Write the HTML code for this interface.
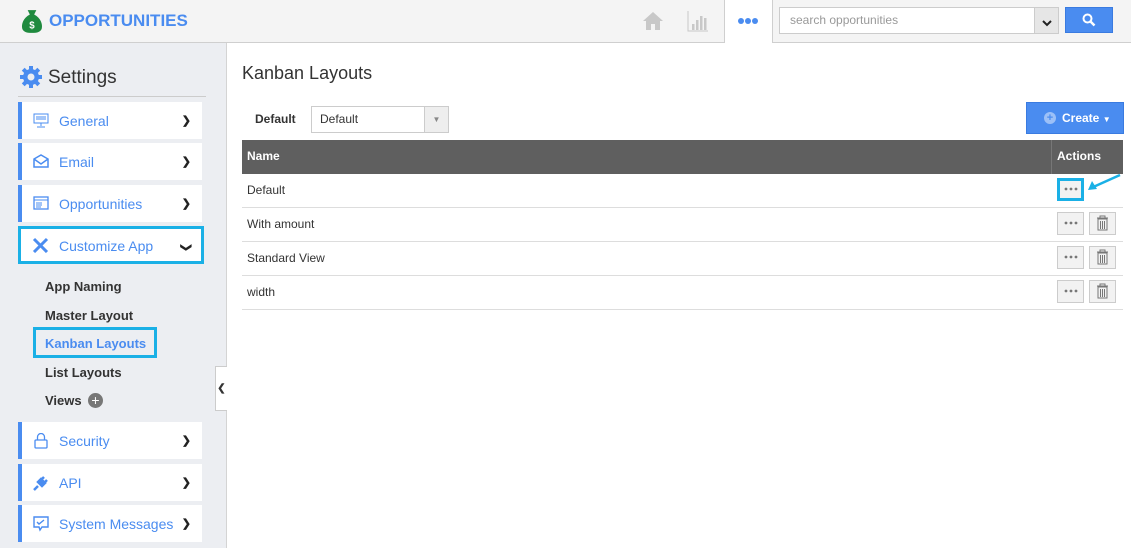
<!DOCTYPE html>
<html><head><style>
*{box-sizing:border-box;margin:0;padding:0}
body{width:1131px;height:548px;overflow:hidden;font-family:"Liberation Sans",sans-serif;background:#fff;position:relative;font-size:14px;color:#333}
.abs{position:absolute}
.hdr{left:0;top:0;width:1131px;height:43px;background:#f4f4f4;border-bottom:1px solid #cfcfcf}
.side{left:0;top:43px;width:227px;height:505px;background:#eceef2;border-right:1px solid #d4d4d4}
.item{position:absolute;left:18px;width:184px;height:37px;background:#fff;border-left:4px solid #4a8cf0;color:#4a8cf0;font-size:14px;line-height:39px;padding-left:37px}
.item svg{position:absolute;left:11px;top:11px}
.chev{position:absolute;right:11px;top:0;color:#222;font-weight:bold;font-size:11px}
.sub{position:absolute;left:45px;font-size:13px;font-weight:bold;color:#333}
.row{position:absolute;left:242px;width:881px;height:34px;border-bottom:1px solid #ddd;font-size:12px;line-height:33px;padding-left:5px}
.bt{position:absolute;top:4px;width:27px;height:23px;background:#f2f2f2;border:1px solid #ccc;text-align:center}
.bt svg{display:block;margin:8px auto 0}
</style></head><body>
<div class="abs hdr">
 <svg class="abs" style="left:21px;top:8px" width="22" height="26" viewBox="0 0 20 24"><path d="M6 2h8l-2 4h-4z M8 6h4c6 3 8 9 7 13-1 3-4 4-9 4s-8-1-9-4c-1-4 1-10 7-13z" fill="#1f8a3e"/><text x="10" y="19" font-size="9" fill="#fff" text-anchor="middle" font-weight="bold" font-family="Liberation Sans">$</text></svg>
 <div class="abs" style="left:49px;top:11px;font-size:17px;font-weight:bold;color:#4a8cf0">OPPORTUNITIES</div>
 <svg class="abs" style="left:642px;top:11px" width="22" height="20" viewBox="0 0 22 20"><path d="M11 1L1 10h3v9h5v-6h4v6h5v-9h3z" fill="#c8c8c8"/></svg>
 <svg class="abs" style="left:687px;top:10px" width="22" height="22" viewBox="0 0 22 22"><path d="M1 1v20h20" stroke="#c8c8c8" fill="none"/><rect x="5" y="14" width="2.5" height="6" fill="#c8c8c8"/><rect x="9" y="10" width="2.5" height="10" fill="#c8c8c8"/><rect x="13" y="6" width="2.5" height="14" fill="#c8c8c8"/><rect x="17" y="8" width="2.5" height="12" fill="#c8c8c8"/></svg>
 <div class="abs" style="left:724px;top:0;width:49px;height:43px;background:#fff;border-left:1px solid #cfcfcf;border-right:1px solid #cfcfcf"></div>
 <svg class="abs" style="left:737px;top:17px" width="22" height="8"><circle cx="4" cy="4" r="3" fill="#4a8cf0"/><circle cx="11" cy="4" r="3" fill="#4a8cf0"/><circle cx="18" cy="4" r="3" fill="#4a8cf0"/></svg>
 <div class="abs" style="left:779px;top:7px;width:280px;height:27px;background:#fff;border:1px solid #ccc;font-size:12px;color:#999;line-height:25px;padding-left:10px">search opportunities</div>
 <div class="abs" style="left:1034px;top:7px;width:25px;height:27px;background:#e6e6e6;border:1px solid #ccc"><svg width="10" height="7" style="position:absolute;left:7px;top:12px"><path d="M1 1l4 4 4-4" stroke="#222" stroke-width="2" fill="none"/></svg></div>
 <div class="abs" style="left:1065px;top:7px;width:48px;height:26px;background:#4a8cf0;border:1px solid #3a7be0"></div>
 <svg class="abs" style="left:1082px;top:13px" width="14" height="14"><circle cx="5.5" cy="5.5" r="4" stroke="#fff" stroke-width="2" fill="none"/><path d="M8.5 8.5l4 4" stroke="#fff" stroke-width="2.5"/></svg>
</div>
<div class="abs side"></div>
<svg class="abs" style="left:19px;top:65px" width="24" height="24" viewBox="0 0 24 24"><g fill="#4a8cf0"><circle cx="12" cy="12" r="8"/><rect x="10" y="1" width="4" height="22"/><rect x="1" y="10" width="22" height="4"/><rect x="10" y="1" width="4" height="22" transform="rotate(45 12 12)"/><rect x="10" y="1" width="4" height="22" transform="rotate(-45 12 12)"/></g><circle cx="12" cy="12" r="3.5" fill="#eceef2"/></svg>
<div class="abs" style="left:48px;top:67px;font-size:19px;color:#333">Settings</div>
<div class="abs" style="left:18px;top:96px;width:188px;height:1px;background:#ccc"></div>
<div class="item" style="top:102px"><svg width="16" height="15"><rect x="1" y="1" width="14" height="9" fill="none" stroke="#4a8cf0"/><path d="M3 4h10M3 6h10M8 10v3M4 14h8" stroke="#4a8cf0"/></svg>General<span class="chev">&#10095;</span></div>
<div class="item" style="top:143px"><svg width="16" height="15"><path d="M1 5l7-4 7 4v8H1z M1 5l7 5 7-5" fill="none" stroke="#4a8cf0" stroke-width="1.5"/></svg>Email<span class="chev">&#10095;</span></div>
<div class="item" style="top:185px"><svg width="16" height="15"><rect x="1" y="1" width="14" height="12" fill="none" stroke="#4a8cf0" stroke-width="1.3"/><path d="M1 4h14M3 7h6M3 9h6M3 11h5" stroke="#4a8cf0"/></svg>Opportunities<span class="chev">&#10095;</span></div>
<div class="item" style="top:226px;left:18px;width:186px;height:38px;border:3px solid #1ab0e6;line-height:35px;padding-left:38px"><svg width="17" height="16" style="left:11px;top:8px"><path d="M2 2l13 13M15 2L2 15" stroke="#4a8cf0" stroke-width="3"/></svg>Customize App<span class="chev" style="right:11px;top:1px;transform:rotate(90deg)">&#10095;</span></div>
<div class="sub" style="top:279px">App Naming</div>
<div class="sub" style="top:308px">Master Layout</div>
<div class="abs" style="left:33px;top:327px;width:124px;height:31px;border:3px solid #1ab0e6"></div>
<div class="sub" style="top:336px;color:#4a8cf0">Kanban Layouts</div>
<div class="sub" style="top:365px">List Layouts</div>
<div class="sub" style="top:393px">Views</div>
<div class="abs" style="left:88px;top:393px;width:15px;height:15px;border-radius:50%;background:#777;color:#fff;font-size:14px;line-height:14px;text-align:center">+</div>
<div class="abs" style="left:215px;top:366px;width:12px;height:45px;background:#fff;border:1px solid #ccc;border-right:none;font-size:10px;font-weight:bold;line-height:43px;text-align:center">&#10094;</div>
<div class="item" style="top:422px"><svg width="16" height="16"><rect x="2" y="7" width="12" height="8" rx="1" fill="none" stroke="#4a8cf0" stroke-width="1.3"/><path d="M4.5 7V4a3.5 3.5 0 017 0v3" fill="none" stroke="#4a8cf0" stroke-width="1.3"/></svg>Security<span class="chev">&#10095;</span></div>
<div class="item" style="top:464px"><svg width="16" height="16"><path d="M1 15l4-4M5 7l4 4 3-3-4-4zM9 4l2-2M12 7l2-2" stroke="#4a8cf0" stroke-width="2.5" fill="#4a8cf0"/></svg>API<span class="chev">&#10095;</span></div>
<div class="item" style="top:505px"><svg width="16" height="16"><path d="M1 1h14v10H9l-2 3-1-3H1z" fill="none" stroke="#4a8cf0" stroke-width="1.4"/><path d="M4 6l2 2 5-4" stroke="#4a8cf0" stroke-width="1.4" fill="none"/></svg>System Messages<span class="chev">&#10095;</span></div>

<div class="abs" style="left:242px;top:63px;font-size:18px;color:#333">Kanban Layouts</div>
<div class="abs" style="left:255px;top:112px;font-size:12px;font-weight:bold">Default</div>
<div class="abs" style="left:311px;top:106px;width:138px;height:27px;border:1px solid #ccc;background:#fff;font-size:12px;line-height:25px;padding-left:8px">Default</div>
<div class="abs" style="left:424px;top:107px;width:24px;height:25px;background:#eee;border-left:1px solid #ccc;color:#888;font-size:8px;text-align:center;line-height:25px">&#9660;</div>
<div class="abs" style="left:1026px;top:102px;width:98px;height:32px;background:#4a8cf0;border:1px solid #3a7be0;color:#fff;font-size:12px;font-weight:bold;line-height:30px;padding-left:35px">Create <span style="font-size:8px">&#9660;</span></div>
<div class="abs" style="left:1044px;top:112px;width:12px;height:12px;border-radius:50%;background:#9cc0f7;color:#4a8cf0;font-size:11px;line-height:12px;text-align:center;font-weight:bold">+</div>
<div class="abs" style="left:242px;top:140px;width:881px;height:34px;background:#5f5f5f;color:#fff;font-size:12px;font-weight:bold;line-height:32px;padding-left:5px">Name</div>
<div class="abs" style="left:1051px;top:140px;width:1px;height:34px;background:#777"></div>
<div class="abs" style="left:1057px;top:140px;color:#fff;font-size:12px;font-weight:bold;line-height:32px">Actions</div>
<div class="row" style="top:174px">Default<div class="bt" style="left:815px;border:3px solid #1ab0e6"><svg width="14" height="4" style="margin-top:6px"><circle cx="2" cy="2" r="1.4" fill="#777"/><circle cx="7" cy="2" r="1.4" fill="#777"/><circle cx="12" cy="2" r="1.4" fill="#777"/></svg></div></div>
<svg class="abs" style="left:1086px;top:173px" width="36" height="20"><path d="M34 2L5 15" stroke="#1ab0e6" stroke-width="2.5"/><path d="M2 17l4-9 5 8z" fill="#1ab0e6"/></svg>
<div class="row" style="top:208px">With amount<div class="bt" style="left:815px"><svg width="14" height="4"><circle cx="2" cy="2" r="1.4" fill="#777"/><circle cx="7" cy="2" r="1.4" fill="#777"/><circle cx="12" cy="2" r="1.4" fill="#777"/></svg></div><div class="bt" style="left:847px"><svg width="13" height="16" style="margin-top:2px"><path d="M1 3h11M4 3V1h5v2M2 4h9v11H2zM4.5 6v8M6.5 6v8M8.5 6v8" stroke="#777" fill="none"/></svg></div></div>
<div class="row" style="top:242px">Standard View<div class="bt" style="left:815px"><svg width="14" height="4"><circle cx="2" cy="2" r="1.4" fill="#777"/><circle cx="7" cy="2" r="1.4" fill="#777"/><circle cx="12" cy="2" r="1.4" fill="#777"/></svg></div><div class="bt" style="left:847px"><svg width="13" height="16" style="margin-top:2px"><path d="M1 3h11M4 3V1h5v2M2 4h9v11H2zM4.5 6v8M6.5 6v8M8.5 6v8" stroke="#777" fill="none"/></svg></div></div>
<div class="row" style="top:276px">width<div class="bt" style="left:815px"><svg width="14" height="4"><circle cx="2" cy="2" r="1.4" fill="#777"/><circle cx="7" cy="2" r="1.4" fill="#777"/><circle cx="12" cy="2" r="1.4" fill="#777"/></svg></div><div class="bt" style="left:847px"><svg width="13" height="16" style="margin-top:2px"><path d="M1 3h11M4 3V1h5v2M2 4h9v11H2zM4.5 6v8M6.5 6v8M8.5 6v8" stroke="#777" fill="none"/></svg></div></div>
</body></html>
